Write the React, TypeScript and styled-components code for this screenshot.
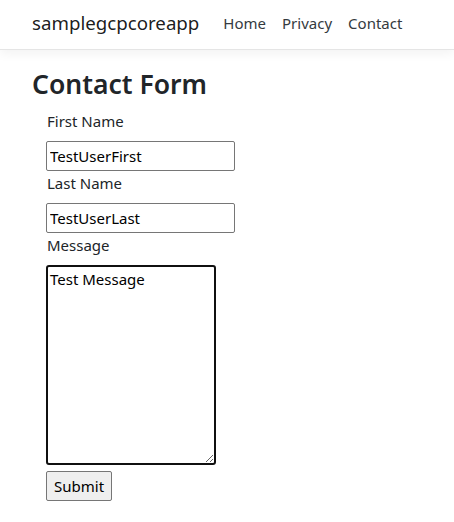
import React from "react";
import styled, { createGlobalStyle } from "styled-components";

const GlobalStyle = createGlobalStyle`
  html, body {
    margin: 0;
    padding: 0;
    background: #fff;
    color: #212529;
    font-family: "Noto Sans", "Open Sans", sans-serif;
    font-size: 15px;
  }
  * {
    box-sizing: border-box;
  }
`;

const Navbar = styled.nav`
  height: 50px;
  display: flex;
  align-items: center;
  padding: 0 32px 4px;
  background: #fff;
  border-bottom: 1px solid #e5e5e5;
  box-shadow: 0 4px 10px rgba(0, 0, 0, 0.05);
  margin-bottom: 17px;
`;

const Brand = styled.a`
  font-size: 18.7px;
  color: rgba(0, 0, 0, 0.9);
  text-decoration: none;
  margin-right: 16px;
`;

const NavList = styled.ul`
  display: flex;
  list-style: none;
  margin: 0;
  padding: 0;
`;

const NavLink = styled.a`
  display: block;
  padding: 8px;
  font-size: 15px;
  color: #343a40;
  text-decoration: none;
`;

const Container = styled.main`
  padding: 0 32px;
`;

const Title = styled.h2`
  font-size: 26.5px;
  font-weight: 600;
  line-height: 34px;
  margin: 0 0 8px;
`;

const Form = styled.form`
  display: flex;
  flex-direction: column;
  align-items: flex-start;
  padding-left: 14px;
`;

const Label = styled.label`
  display: block;
  line-height: 24px;
  margin-bottom: 8px;
  color: #212529;
  margin-left: 1px;
`;

const Input = styled.input`
  width: 189px;
  height: 30px;
  padding: 1px 3px;
  font: inherit;
  font-size: 15px;
  color: #000;
  border: 1px solid #767676;
  border-radius: 2px;
`;

const TextArea = styled.textarea`
  width: 170px;
  height: 200px;
  padding: 2px;
  font: inherit;
  font-size: 15px;
  color: #000;
  border: 2px solid #101010;
  border-radius: 3px;
  outline: none;
  resize: both;
`;

const SubmitButton = styled.button`
  margin-top: 6px;
  height: 30px;
  padding: 1px 7px;
  font: inherit;
  font-size: 15px;
  color: #000;
  background: #efefef;
  border: 1px solid #767676;
  border-radius: 2px;
`;

export default function App() {
  return (
    <>
      <GlobalStyle />
      <Navbar>
        <Brand href="#">samplegcpcoreapp</Brand>
        <NavList>
          <li>
            <NavLink href="#">Home</NavLink>
          </li>
          <li>
            <NavLink href="#">Privacy</NavLink>
          </li>
          <li>
            <NavLink href="#">Contact</NavLink>
          </li>
        </NavList>
      </Navbar>
      <Container>
        <Title>Contact Form</Title>
        <Form onSubmit={(e) => e.preventDefault()}>
          <Label htmlFor="first">First Name</Label>
          <Input id="first" defaultValue="TestUserFirst" />
          <Label htmlFor="last">Last Name</Label>
          <Input id="last" defaultValue="TestUserLast" />
          <Label htmlFor="msg">Message</Label>
          <TextArea id="msg" defaultValue="Test Message" />
          <SubmitButton type="submit">Submit</SubmitButton>
        </Form>
      </Container>
    </>
  );
}
